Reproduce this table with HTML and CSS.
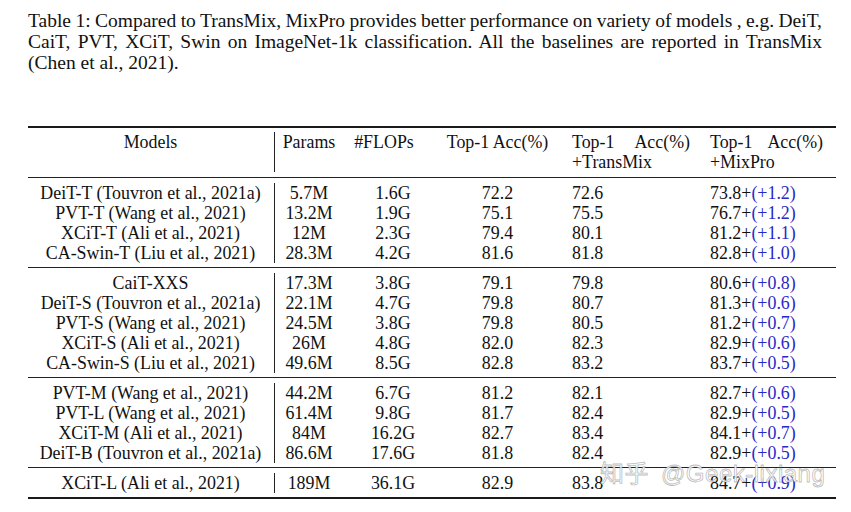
FILE: index.html
```html
<!DOCTYPE html>
<html lang="en">
<head>
<meta charset="utf-8">
<title>Table 1</title>
<link rel="stylesheet" href="styles.css">
</head>
<body>
<div class="page">
  <div class="caption">
    <div class="cap-line just">Table 1: Compared to TransMix, MixPro provides better performance on variety of models , e.g. DeiT,</div>
    <div class="cap-line just">CaiT, PVT, XCiT, Swin on ImageNet-1k classification. All the baselines are reported in TransMix</div>
    <div class="cap-line">(Chen et al., 2021).</div>
  </div>

  <div class="table">
    <div class="group head">
      <div class="row">
        <div class="c1">Models</div>
        <div class="c2">Params</div>
        <div class="c3 flops-h">#FLOPs</div>
        <div class="c4">Top-1 Acc(%)</div>
        <div class="c5"><div class="hj">Top-1 Acc(%)</div><div>+TransMix</div></div>
        <div class="c6"><div class="hj">Top-1 Acc(%)</div><div>+MixPro</div></div>
      </div>
    </div>

    <div class="group">
      <div class="row"><div class="c1">DeiT-T (Touvron et al., 2021a)</div><div class="c2">5.7M</div><div class="c3">1.6G</div><div class="c4">72.2</div><div class="c5">72.6</div><div class="c6">73.8+<span class="gain">(+1.2)</span></div></div>
      <div class="row"><div class="c1">PVT-T (Wang et al., 2021)</div><div class="c2">13.2M</div><div class="c3">1.9G</div><div class="c4">75.1</div><div class="c5">75.5</div><div class="c6">76.7+<span class="gain">(+1.2)</span></div></div>
      <div class="row"><div class="c1">XCiT-T (Ali et al., 2021)</div><div class="c2">12M</div><div class="c3">2.3G</div><div class="c4">79.4</div><div class="c5">80.1</div><div class="c6">81.2+<span class="gain">(+1.1)</span></div></div>
      <div class="row"><div class="c1">CA-Swin-T (Liu et al., 2021)</div><div class="c2">28.3M</div><div class="c3">4.2G</div><div class="c4">81.6</div><div class="c5">81.8</div><div class="c6">82.8+<span class="gain">(+1.0)</span></div></div>
    </div>

    <div class="group">
      <div class="row"><div class="c1">CaiT-XXS</div><div class="c2">17.3M</div><div class="c3">3.8G</div><div class="c4">79.1</div><div class="c5">79.8</div><div class="c6">80.6+<span class="gain">(+0.8)</span></div></div>
      <div class="row"><div class="c1">DeiT-S (Touvron et al., 2021a)</div><div class="c2">22.1M</div><div class="c3">4.7G</div><div class="c4">79.8</div><div class="c5">80.7</div><div class="c6">81.3+<span class="gain">(+0.6)</span></div></div>
      <div class="row"><div class="c1">PVT-S (Wang et al., 2021)</div><div class="c2">24.5M</div><div class="c3">3.8G</div><div class="c4">79.8</div><div class="c5">80.5</div><div class="c6">81.2+<span class="gain">(+0.7)</span></div></div>
      <div class="row"><div class="c1">XCiT-S (Ali et al., 2021)</div><div class="c2">26M</div><div class="c3">4.8G</div><div class="c4">82.0</div><div class="c5">82.3</div><div class="c6">82.9+<span class="gain">(+0.6)</span></div></div>
      <div class="row"><div class="c1">CA-Swin-S (Liu et al., 2021)</div><div class="c2">49.6M</div><div class="c3">8.5G</div><div class="c4">82.8</div><div class="c5">83.2</div><div class="c6">83.7+<span class="gain">(+0.5)</span></div></div>
    </div>

    <div class="group">
      <div class="row"><div class="c1">PVT-M (Wang et al., 2021)</div><div class="c2">44.2M</div><div class="c3">6.7G</div><div class="c4">81.2</div><div class="c5">82.1</div><div class="c6">82.7+<span class="gain">(+0.6)</span></div></div>
      <div class="row"><div class="c1">PVT-L (Wang et al., 2021)</div><div class="c2">61.4M</div><div class="c3">9.8G</div><div class="c4">81.7</div><div class="c5">82.4</div><div class="c6">82.9+<span class="gain">(+0.5)</span></div></div>
      <div class="row"><div class="c1">XCiT-M (Ali et al., 2021)</div><div class="c2">84M</div><div class="c3">16.2G</div><div class="c4">82.7</div><div class="c5">83.4</div><div class="c6">84.1+<span class="gain">(+0.7)</span></div></div>
      <div class="row"><div class="c1">DeiT-B (Touvron et al., 2021a)</div><div class="c2">86.6M</div><div class="c3">17.6G</div><div class="c4">81.8</div><div class="c5">82.4</div><div class="c6">82.9+<span class="gain">(+0.5)</span></div></div>
    </div>

    <div class="group last">
      <div class="row"><div class="c1">XCiT-L (Ali et al., 2021)</div><div class="c2">189M</div><div class="c3">36.1G</div><div class="c4">82.9</div><div class="c5">83.8</div><div class="c6">84.7+<span class="gain">(+0.9)</span></div></div>
    </div>
  </div>

  <div class="watermark"><span>知乎</span><span>@Geek-lixiang</span></div>
</div>
</body>
</html>
```

FILE: styles.css
```css
* { box-sizing: border-box; }

html, body {
  margin: 0;
  padding: 0;
  background: #ffffff;
}

.page {
  position: relative;
  width: 851px;
  height: 512px;
  padding: 10px 15px 0 28px;
  color: #111;
  font-family: "Liberation Serif", "Times New Roman", serif;
  overflow: hidden;
}

.caption {
  width: 794px;
  font-size: 19.5px;
  line-height: 21px;
  margin-bottom: 53px;
}

.cap-line { white-space: nowrap; }

.cap-line.just {
  text-align: justify;
  text-align-last: justify;
  white-space: normal;
  word-spacing: -3px;
}

.table {
  width: 808px;
  font-size: 17.9px;
  line-height: 20px;
  border-top: 2px solid #1a1a1a;
  border-bottom: 2px solid #1a1a1a;
}

.group {
  padding: 5px 0 4px;
  border-bottom: 1px solid #222;
}

.group.head {
  padding: 4px 0 5px;
}

.group.last {
  border-bottom: none;
}

.row {
  display: grid;
  grid-template-columns: 247px 68px 100px 109px 138px 146px;
  white-space: nowrap;
}

.c1 {
  text-align: center;
  border-right: 1px solid #222;
  padding-right: 1px;
}

.c2, .c3, .c4 { text-align: center; }

.flops-h { padding-right: 18px; }

.c5 { padding-left: 20px; }
.c6 { padding-left: 20px; padding-right: 13px; }

.hj {
  text-align: justify;
  text-align-last: justify;
  white-space: normal;
}

.gain { color: #2828c8; }

.watermark {
  position: absolute;
  left: 600px;
  top: 462px;
  display: flex;
  gap: 12px;
  font-family: "Liberation Sans", "Noto Sans CJK SC", sans-serif;
  font-size: 24px;
  line-height: 24px;
  letter-spacing: 0.5px;
  white-space: nowrap;
  color: rgba(255, 255, 255, 0.9);
  -webkit-text-stroke: 0.8px rgba(120, 120, 120, 0.5);
}
```
